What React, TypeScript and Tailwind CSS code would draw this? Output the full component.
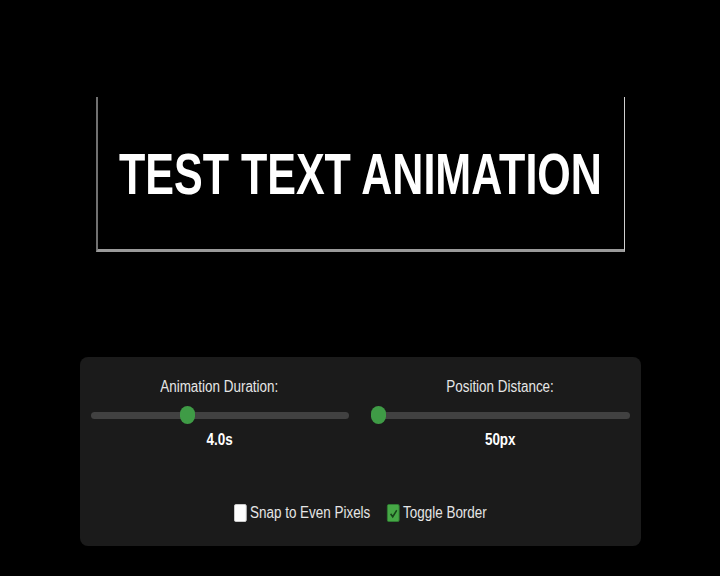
import { useState } from 'react'

function Check({ checked, onChange, label }: { checked: boolean; onChange: () => void; label: string }) {
  return (
    <label className="flex items-center gap-[4px] cursor-pointer select-none">
      <input type="checkbox" checked={checked} onChange={onChange} className="sr-only" />
      {checked ? (
        <span className="w-[15px] h-[18px] rounded-[2px] bg-[#46a846] border border-[#2f7d32] flex items-center justify-center">
          <svg viewBox="0 0 12 12" className="w-[12px] h-[11px]">
            <path d="M2 6.5 L4.8 9.5 L10 2.5" fill="none" stroke="#17451a" strokeWidth="2" />
          </svg>
        </span>
      ) : (
        <span className="w-[15px] h-[18px] rounded-[2px] bg-white border border-[#cfcfcf]" />
      )}
      <span className="text-[16px] leading-[20px] text-[#e6e6e6]">{label}</span>
    </label>
  )
}

const rangeCls =
  'w-full h-[18px] appearance-none bg-transparent cursor-pointer ' +
  '[&::-webkit-slider-runnable-track]:h-[7px] [&::-webkit-slider-runnable-track]:rounded-full [&::-webkit-slider-runnable-track]:bg-[#414141] ' +
  '[&::-webkit-slider-thumb]:appearance-none [&::-webkit-slider-thumb]:w-[15px] [&::-webkit-slider-thumb]:h-[18px] [&::-webkit-slider-thumb]:rounded-full [&::-webkit-slider-thumb]:bg-[#3f9b46] [&::-webkit-slider-thumb]:mt-[-5.5px]'

// condensed text, the page's face is narrower than Arial
const narrow = 'inline-block whitespace-nowrap scale-x-[0.84]'

export default function App() {
  const [duration, setDuration] = useState(4)
  const [distance, setDistance] = useState(50)
  const [snap, setSnap] = useState(false)
  const [border, setBorder] = useState(true)

  return (
    <div className="min-h-screen bg-black flex flex-col items-center font-['Liberation_Sans',Arial,sans-serif]">
      {/* Stage */}
      <div
        className={`mt-[97px] w-[529px] h-[155px] pt-[1px] flex items-center justify-center ${
          border ? 'border-l-2 border-l-[#707070] border-r border-r-[#d0d0d0] border-b-[3px] border-b-[#9a9a9a]' : ''
        }`}
      >
        <h1 className="shrink-0 whitespace-nowrap scale-x-[0.742] text-white font-bold text-[58px] leading-none">
          TEST TEXT ANIMATION
        </h1>
      </div>

      {/* Controls */}
      <div className="mt-[105px] w-[561px] rounded-lg bg-[#1b1b1b] px-[11px] pt-[20px] pb-[23px]">
        <div className="grid grid-cols-2 gap-[22px]">
          <div className="flex flex-col items-center">
            <span className={`${narrow} text-[16px] leading-[20px] text-[#e6e6e6]`}>Animation Duration:</span>
            <input
              type="range"
              min={0.5}
              max={10}
              step={0.1}
              value={duration}
              onChange={(e) => setDuration(Number(e.target.value))}
              className={`mt-[9px] ${rangeCls}`}
            />
            <span className={`${narrow} mt-[6px] text-[16px] leading-[20px] font-bold text-white`}>
              {duration.toFixed(1)}s
            </span>
          </div>
          <div className="flex flex-col items-center">
            <span className={`${narrow} text-[16px] leading-[20px] text-[#e6e6e6]`}>Position Distance:</span>
            <input
              type="range"
              min={50}
              max={500}
              step={10}
              value={distance}
              onChange={(e) => setDistance(Number(e.target.value))}
              className={`mt-[9px] ${rangeCls}`}
            />
            <span className={`${narrow} mt-[6px] text-[16px] leading-[20px] font-bold text-white`}>{distance}px</span>
          </div>
        </div>
        <div className="mt-[53px] flex justify-center">
          <div className="flex gap-[20px] scale-x-[0.84]">
            <Check checked={snap} onChange={() => setSnap((v) => !v)} label="Snap to Even Pixels" />
            <Check checked={border} onChange={() => setBorder((v) => !v)} label="Toggle Border" />
          </div>
        </div>
      </div>
    </div>
  )
}
